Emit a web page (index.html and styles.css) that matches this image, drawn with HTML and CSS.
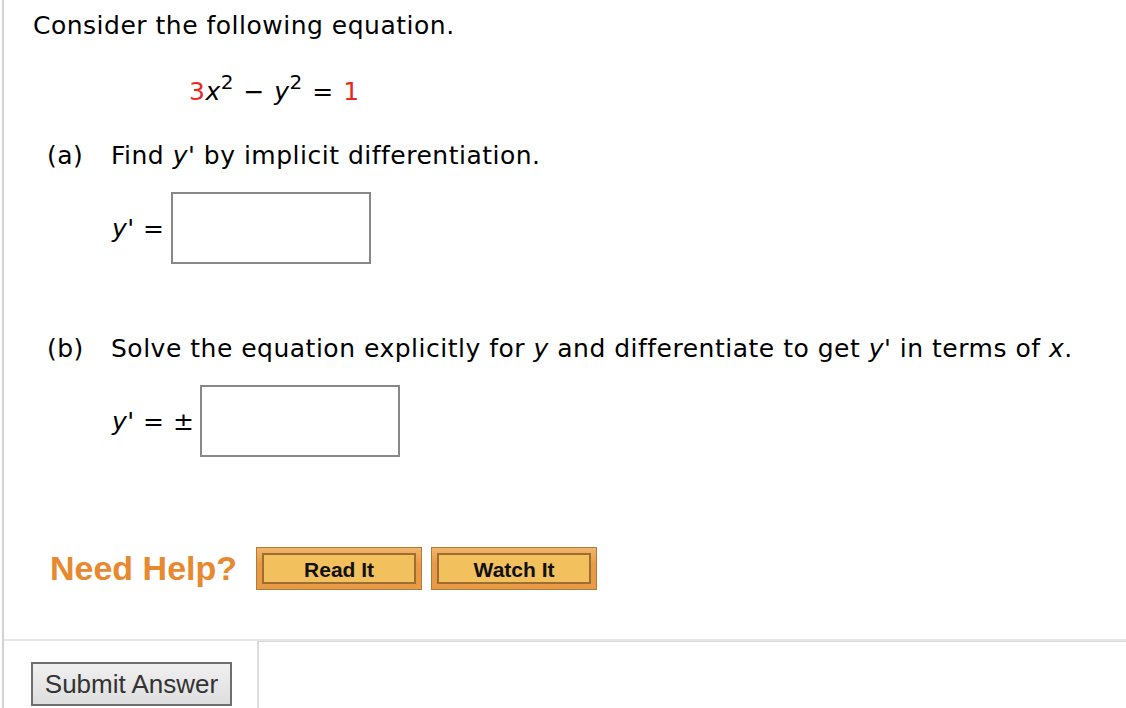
FILE: index.html
```html
<!DOCTYPE html>
<html>
<head>
<meta charset="utf-8">
<link rel="stylesheet" href="styles.css">
</head>
<body>
<div class="page">
  <div class="content">
    <p class="intro">Consider the following equation.</p>
    <p class="equation"><span class="red">3</span><i>x</i><sup>2</sup> &minus; <i>y</i><sup>2</sup> = <span class="red">1</span></p>

    <div class="part part-a">
      <span class="label">(a)</span><span class="question">Find <i>y'</i> by implicit differentiation.</span>
    </div>
    <div class="answer answer-a">
      <span class="lhs"><i>y'</i> =</span>
      <span class="box"></span>
    </div>

    <div class="part part-b">
      <span class="label">(b)</span><span class="question">Solve the equation explicitly for <i>y</i> and differentiate to get <i>y'</i> in terms of <i>x</i>.</span>
    </div>
    <div class="answer answer-b">
      <span class="lhs"><i>y'</i> = &plusmn;</span>
      <span class="box"></span>
    </div>

    <div class="help">
      <span class="need">Need Help?</span>
      <span class="hbtn"><span class="hbtn-inner">Read It</span></span>
      <span class="hbtn"><span class="hbtn-inner">Watch It</span></span>
    </div>
  </div>
  <div class="footer">
    <div class="submit-cell"><button class="submit">Submit Answer</button></div>
    <div class="rest-cell"></div>
  </div>
</div>
</body>
</html>
```
FILE: styles.css
```css
html, body {
  margin: 0;
  padding: 0;
  background: #fff;
}
body {
  font-family: "DejaVu Sans", Verdana, sans-serif;
  font-size: 25px;
  letter-spacing: 0.5px;
  color: #000;
  overflow: hidden;
}
.page {
  margin-left: 2px;
  border-left: 2px solid #d2d2d2;
  min-height: 708px;
  box-sizing: border-box;
}
.content {
  padding: 10px 0 0 29px;
  height: 639px;
  box-sizing: border-box;
}
p { margin: 0; }
.intro {
  line-height: 32px;
}
.equation {
  line-height: 32px;
  margin-top: 34px;
  margin-left: 156px;
  word-spacing: 1px;
}
.equation sup {
  font-size: 20px;
  line-height: 0;
  vertical-align: 11px;
}
.red { color: #e8281e; }
.part {
  display: flex;
  line-height: 32px;
}
.part-a { margin-top: 32px; }
.part-b { margin-top: 69px; }
.label {
  width: 64px;
  margin-left: 14px;
  flex: none;
}
.answer {
  display: flex;
  align-items: center;
  margin-top: 20px;
  margin-left: 79px;
  height: 72px;
}
.lhs {
  margin-right: 6px;
}
.box {
  width: 196px;
  height: 68px;
  border: 2px solid #888;
}
.help {
  display: flex;
  align-items: center;
  margin-top: 90px;
  margin-left: 17px;
}
.need {
  font-family: "Liberation Sans", Arial, sans-serif;
  font-weight: bold;
  font-size: 34px;
  letter-spacing: 0;
  color: #e8892f;
  margin-right: 19px;
}
.hbtn {
  display: flex;
  width: 166px;
  height: 43px;
  box-sizing: border-box;
  border: 1px solid #b07b38;
  background: linear-gradient(#f0b56a, #e99a45 40%, #e99a45);
  padding: 5px;
  margin-right: 9px;
}
.hbtn-inner {
  flex: 1;
  display: flex;
  align-items: center;
  justify-content: center;
  border: 2px solid #9c6e33;
  background: #f3c05e;
  font-family: "Liberation Sans", Arial, sans-serif;
  font-weight: bold;
  font-size: 21px;
  letter-spacing: 0;
  color: #111;
  padding-top: 2px;
}
.footer {
  display: flex;
  border-top: 2px solid #e6e6e6;
  height: 69px;
  box-sizing: border-box;
}
.submit-cell {
  width: 253px;
  flex: none;
  padding: 21px 0 0 27px;
  box-sizing: border-box;
}
.rest-cell {
  flex: 1;
  border-left: 2px solid #dcdcdc;
  border-top: 1px solid #d8d8d8;
}
.submit {
  width: 201px;
  height: 44px;
  border: 2px solid #6e6e6e;
  background: linear-gradient(#f0f0f0, #dedede);
  font-family: "Liberation Sans", Arial, sans-serif;
  font-size: 26px;
  letter-spacing: 0;
  color: #333;
  padding: 0;
}
```
